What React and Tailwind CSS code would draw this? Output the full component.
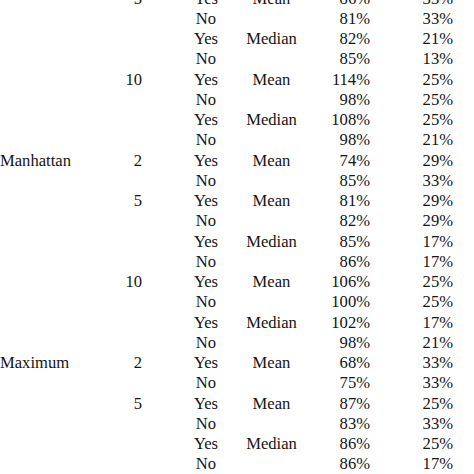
import React from "react";

const rows = [
  ["", "5", "Yes", "Mean", "86%", "33%"],
  ["", "", "No", "", "81%", "33%"],
  ["", "", "Yes", "Median", "82%", "21%"],
  ["", "", "No", "", "85%", "13%"],
  ["", "10", "Yes", "Mean", "114%", "25%"],
  ["", "", "No", "", "98%", "25%"],
  ["", "", "Yes", "Median", "108%", "25%"],
  ["", "", "No", "", "98%", "21%"],
  ["Manhattan", "2", "Yes", "Mean", "74%", "29%"],
  ["", "", "No", "", "85%", "33%"],
  ["", "5", "Yes", "Mean", "81%", "29%"],
  ["", "", "No", "", "82%", "29%"],
  ["", "", "Yes", "Median", "85%", "17%"],
  ["", "", "No", "", "86%", "17%"],
  ["", "10", "Yes", "Mean", "106%", "25%"],
  ["", "", "No", "", "100%", "25%"],
  ["", "", "Yes", "Median", "102%", "17%"],
  ["", "", "No", "", "98%", "21%"],
  ["Maximum", "2", "Yes", "Mean", "68%", "33%"],
  ["", "", "No", "", "75%", "33%"],
  ["", "5", "Yes", "Mean", "87%", "25%"],
  ["", "", "No", "", "83%", "33%"],
  ["", "", "Yes", "Median", "86%", "25%"],
  ["", "", "No", "", "86%", "17%"],
];

export default function App() {
  return (
    <div className="w-[474px] h-[474px] overflow-hidden bg-white text-[#151515] font-['Liberation_Serif','Times_New_Roman',serif]">
      <div className="mt-[-11.4px] flex flex-col text-[16.6px] leading-[20.26px]">
        {rows.map((r, i) => (
          <div key={i} className="flex h-[20.26px] whitespace-nowrap">
            <div className="w-[110px] text-left">{r[0]}</div>
            <div className="w-[32px] text-right">{r[1]}</div>
            <div className="ml-[34px] w-[60px] text-center">{r[2]}</div>
            <div className="ml-[5px] w-[61px] text-center">{r[3]}</div>
            <div className="w-[68px] text-right">{r[4]}</div>
            <div className="w-[83px] text-right">{r[5]}</div>
          </div>
        ))}
      </div>
    </div>
  );
}
